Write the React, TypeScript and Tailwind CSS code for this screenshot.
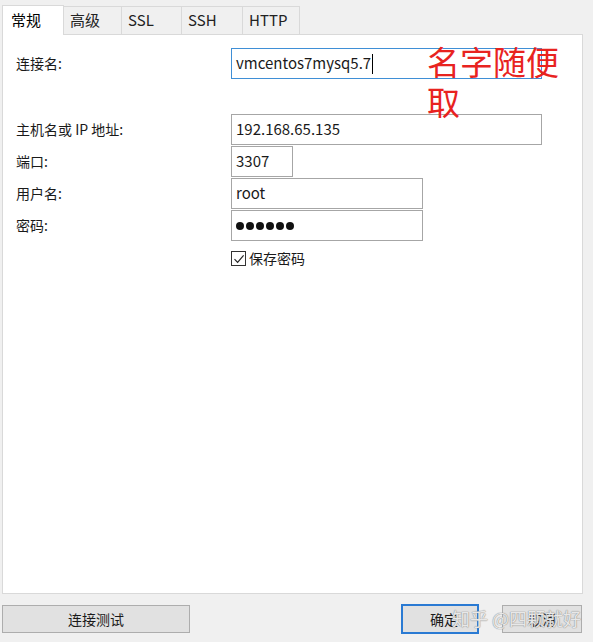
const FONT = "font-['Microsoft_YaHei','Noto_Sans_CJK_SC','Noto_Sans',sans-serif]";

const tabs = ["常规", "高级", "SSL", "SSH", "HTTP"];
const tabWidths = ["w-[62px]", "w-[58px]", "w-[60px]", "w-[61px]", "w-[57px]"];

function Field({ label, width, children, focused, mt }: { label: string; width: string; children: React.ReactNode; focused?: boolean; mt?: string }) {
  return (
    <div className={`flex items-center ${mt ?? "mt-px"}`}>
      <div className="w-[228px] pl-[13px] text-[14px] text-[#1a1a1a]">{label}</div>
      <div
        className={`${width} h-[31px] flex items-center px-[4px] text-[15px] text-[#1a1a1a] bg-white border ${
          focused ? "border-[#3f8fd6]" : "border-[#a6a6a6]"
        }`}
      >
        {children}
      </div>
    </div>
  );
}

export default function App() {
  return (
    <div className={`relative w-[593px] h-[642px] bg-[#f0f0f0] flex flex-col ${FONT}`}>
      <div className="flex items-end pl-[2px] pt-[5px] h-[34px]">
        {tabs.map((t, i) => (
          <div
            key={t}
            className={`${tabWidths[i]} flex items-center border-[#d9d9d9] border-t border-r ${
              i === 0
                ? "h-[30px] bg-white border-l pl-[8px] -mb-px z-10 text-[15px] text-black"
                : "h-[28px] bg-[#f0f0f0] pl-[6px] text-[15px] text-[#222]"
            }`}
          >
            {t}
          </div>
        ))}
      </div>

      <div className="relative ml-[2px] w-[581px] h-[560px] bg-white border border-[#d9d9d9] pt-[13px]">
        <Field label="连接名:" width="w-[311px]" focused mt="mt-0">
          vmcentos7mysq5.7
          <span className="ml-[1px] w-px h-[20px] bg-black" />
        </Field>
        <Field label="主机名或 IP 地址:" width="w-[311px]" mt="mt-[35px]">
          192.168.65.135
        </Field>
        <Field label="端口:" width="w-[62px]">3307</Field>
        <Field label="用户名:" width="w-[192px]">root</Field>
        <Field label="密码:" width="w-[192px]">
          <div className="flex gap-[2px]">
            {[0, 1, 2, 3, 4, 5].map((d) => (
              <span key={d} className="w-[8px] h-[8px] rounded-full bg-[#111]" />
            ))}
          </div>
        </Field>
        <div className="flex items-center mt-[9px] pl-[228px] h-[17px]">
          <div className="w-[15px] h-[15px] border border-[#333] bg-white flex items-center justify-center">
            <svg viewBox="0 0 12 12" className="w-[12px] h-[12px]">
              <path d="M1.5 6.2 L4.6 9.3 L10.6 2.4" fill="none" stroke="#222" strokeWidth="1.2" />
            </svg>
          </div>
          <span className="ml-[3px] text-[14px] leading-[17px] text-[#1a1a1a]">保存密码</span>
        </div>

        <div className="absolute left-[424px] top-[6px] w-[136px] text-[33px] leading-[40px] text-[#e8231f]">
          名字随便取
        </div>
      </div>

      <div className="flex items-center mt-[10px] px-[2px]">
        <button className="w-[188px] h-[28px] bg-[#e1e1e1] border border-[#adadad] text-[14px] text-[#1a1a1a]">
          连接测试
        </button>
        <div className="flex-1" />
        <button className="w-[78px] h-[30px] bg-[#e1e1e1] border-2 border-[#2a7ad3] text-[14px] text-[#1a1a1a] pl-[8px]">
          确定
        </button>
        <button className="ml-[23px] mr-[9px] w-[80px] h-[28px] bg-[#e1e1e1] border border-[#adadad] text-[14px] text-[#1a1a1a]">
          取消
        </button>
        <div className="absolute left-[452px] top-[605px] text-[18px] leading-[26px] text-white/80 [text-shadow:0_0_1px_#888,0_0_1px_#888]">
          知乎 @四颗就好
        </div>
      </div>
    </div>
  );
}
